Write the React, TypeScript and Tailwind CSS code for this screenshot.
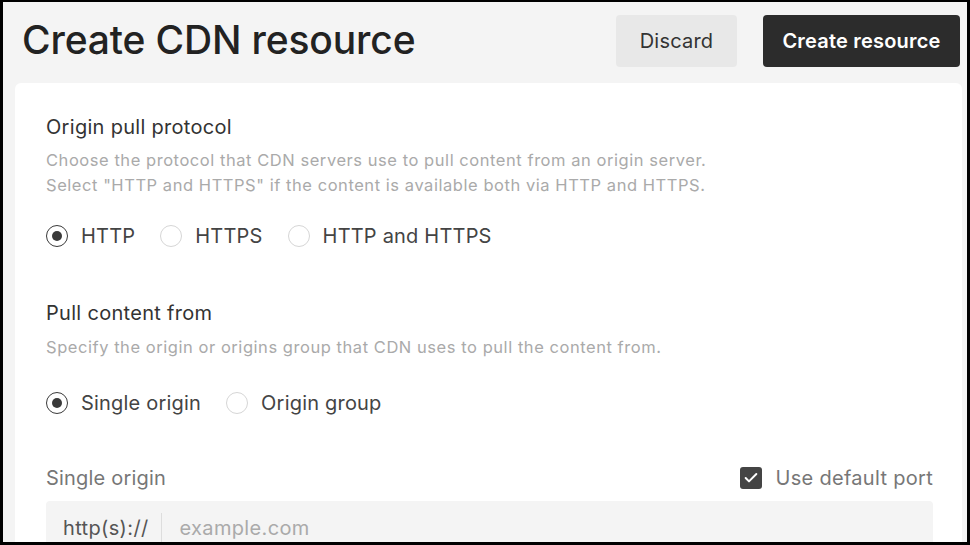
import { Check } from 'lucide-react';

function Radio({ label, checked }: { label: string; checked?: boolean }) {
  return (
    <label className="flex items-center gap-[13px]">
      <span
        className={`flex h-[22px] w-[22px] items-center justify-center rounded-full border-[1.5px] bg-white ${
          checked ? 'border-[#3a3a3a]' : 'border-[#d6d6d6]'
        }`}
      >
        {checked && <span className="h-[10px] w-[10px] rounded-full bg-[#3a3a3a]" />}
      </span>
      <span className="text-[20px] tracking-[0.2px] text-[#444]">{label}</span>
    </label>
  );
}

export default function App() {
  return (
    <div
      className="h-[545px] w-[970px] overflow-hidden border-t-2 border-r-[3px] border-b-[3px] border-l-[3px] border-black bg-[#f4f4f4]"
      style={{ fontFamily: 'Inter, "Liberation Sans", sans-serif' }}
    >
      {/* Header */}
      <div className="flex h-[81px] items-start justify-between pt-[13px] pl-[19px] pr-[7px]">
        <h1 className="mt-[1px] text-[39px] leading-[48px] font-medium tracking-[-0.15px] text-[#222]">
          Create CDN resource
        </h1>
        <div className="flex gap-[26px]">
          <button className="h-[52px] w-[121px] rounded-[4px] bg-[#e8e8e8] text-[20px] tracking-[0.2px] text-[#333]">
            Discard
          </button>
          <button className="h-[52px] w-[197px] rounded-[4px] bg-[#2c2c2c] text-[20px] font-semibold tracking-[0.2px] text-white">
            Create resource
          </button>
        </div>
      </div>

      {/* Card */}
      <div className="ml-[12px] mr-[5px] h-[500px] rounded-t-[6px] bg-white pl-[31px] pr-[29px] pt-[30px]">
        <h2 className="text-[20px] leading-[28px] tracking-[0.3px] text-[#333]">Origin pull protocol</h2>
        <p className="mt-[7px] text-[16.5px] leading-[25px] tracking-[0.55px] text-[#aaa]">
          Choose the protocol that CDN servers use to pull content from an origin server.
          <br />
          Select "HTTP and HTTPS" if the content is available both via HTTP and HTTPS.
        </p>
        <div className="mt-[23px] flex items-center gap-[25px]">
          <Radio label="HTTP" checked />
          <Radio label="HTTPS" />
          <Radio label="HTTP and HTTPS" />
        </div>

        <h2 className="mt-[48px] text-[20px] leading-[28px] tracking-[0.3px] text-[#333]">Pull content from</h2>
        <p className="mt-[8px] text-[16.5px] leading-[25px] tracking-[0.55px] text-[#aaa]">
          Specify the origin or origins group that CDN uses to pull the content from.
        </p>
        <div className="mt-[28px] flex items-center gap-[25px]">
          <Radio label="Single origin" checked />
          <Radio label="Origin group" />
        </div>

        <div className="mt-[45px] flex items-center justify-between">
          <span className="text-[20px] leading-[28px] tracking-[0.2px] text-[#777]">Single origin</span>
          <label className="flex items-center gap-[13px]">
            <span className="flex h-[22px] w-[22px] items-center justify-center rounded-[3px] bg-[#444]">
              <Check className="h-[16px] w-[16px] text-white" strokeWidth={3} />
            </span>
            <span className="text-[20px] tracking-[0.3px] text-[#777]">Use default port</span>
          </label>
        </div>
        <div className="mt-[8px] flex h-[54px] items-center rounded-t-[4px] bg-[#f4f4f4] pl-[17px]">
          <span className="text-[20px] tracking-[0.35px] text-[#555]">http(s)://</span>
          <span className="ml-[12px] mr-[18px] h-[30px] w-px bg-[#ddd]" />
          <span className="text-[20px] tracking-[0.35px] text-[#aaa]">example.com</span>
        </div>
      </div>
    </div>
  );
}
